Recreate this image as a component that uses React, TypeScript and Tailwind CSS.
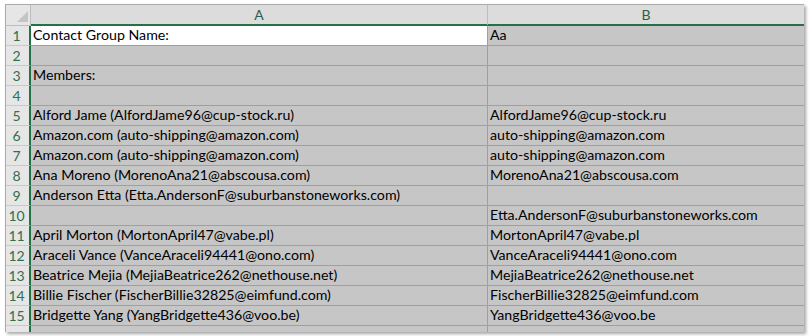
const rows: [string, string][] = [
  ["Contact Group Name:", "Aa"],
  ["", ""],
  ["Members:", ""],
  ["", ""],
  ["Alford Jame (AlfordJame96@cup-stock.ru)", "AlfordJame96@cup-stock.ru"],
  ["Amazon.com (auto-shipping@amazon.com)", "auto-shipping@amazon.com"],
  ["Amazon.com (auto-shipping@amazon.com)", "auto-shipping@amazon.com"],
  ["Ana Moreno (MorenoAna21@abscousa.com)", "MorenoAna21@abscousa.com"],
  ["Anderson Etta (Etta.AndersonF@suburbanstoneworks.com)", ""],
  ["", "Etta.AndersonF@suburbanstoneworks.com"],
  ["April Morton (MortonApril47@vabe.pl)", "MortonApril47@vabe.pl"],
  ["Araceli Vance (VanceAraceli94441@ono.com)", "VanceAraceli94441@ono.com"],
  ["Beatrice Mejia (MejiaBeatrice262@nethouse.net)", "MejiaBeatrice262@nethouse.net"],
  ["Billie Fischer (FischerBillie32825@eimfund.com)", "FischerBillie32825@eimfund.com"],
  ["Bridgette Yang (YangBridgette436@voo.be)", "YangBridgette436@voo.be"],
  ["", ""],
];

const cellFont = { fontFamily: "Lato, 'Open Sans', sans-serif" };

// the last row is only a sliver at the bottom edge, so its number isn't shown
function RowHeader({ n, label }: { n: number; label: boolean }) {
  return (
    <div className="flex h-5 w-[25px] shrink-0 items-center justify-center border-b border-r-2 border-b-[#c9c9c9] border-r-[#217346] bg-[#e6e6e6] pr-[2px] text-[14px] leading-none text-[#2f6f50]">
      {label ? n : null}
    </div>
  );
}

function Cell({ text, white, wide }: { text: string; white?: boolean; wide?: boolean }) {
  return (
    <div
      className={`flex h-5 shrink-0 items-end overflow-visible whitespace-nowrap border-b border-r border-[#9f9f9f] pb-[1px] pl-[2px] text-[14.2px] leading-[18px] text-black ${
        wide ? "w-[457px]" : "w-[317px]"
      } ${white ? "bg-white" : "bg-[#c6c6c6]"}`}
    >
      {text}
    </div>
  );
}

export default function App() {
  return (
    <div className="h-[336px] w-[810px] bg-white pl-[5px] pt-[4px]" style={cellFont}>
      <div className="h-[328px] w-[799px] overflow-hidden border-t border-l border-[#ababab] shadow-[2px_2px_3px_rgba(0,0,0,0.35)]">
        {/* column headers */}
        <div className="flex h-[21px]">
          <div className="relative h-[21px] w-[25px] shrink-0 border-r border-b border-[#bdbdbd] bg-[#e6e6e6]">
            <svg className="absolute right-[2px] bottom-[3px]" width="11" height="11" viewBox="0 0 11 11">
              <path d="M11 0 L11 11 L0 11 Z" fill="#c4c4c4" />
            </svg>
          </div>
          <div className="flex h-[21px] w-[457px] shrink-0 items-center justify-center border-r border-b-2 border-r-[#bdbdbd] border-b-[#217346] bg-[#dcdcdc] pb-[1px] text-[14px] text-[#2d5f4a]">
            A
          </div>
          <div className="flex h-[21px] w-[317px] shrink-0 items-center justify-center border-r border-b-2 border-r-[#bdbdbd] border-b-[#217346] bg-[#dcdcdc] pb-[1px] text-[14px] text-[#2d5f4a]">
            B
          </div>
        </div>
        {rows.map(([a, b], i) => (
          <div key={i} className="flex">
            <RowHeader n={i + 1} label={i < 15} />
            <Cell text={a} wide white={i === 0} />
            <Cell text={b} />
          </div>
        ))}
      </div>
    </div>
  );
}
